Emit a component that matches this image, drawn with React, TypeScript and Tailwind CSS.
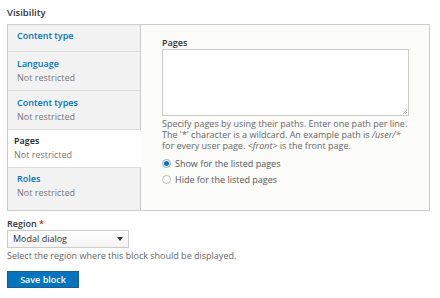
import React from 'react'

const tabs = [
  { title: 'Content type', summary: '' },
  { title: 'Language', summary: 'Not restricted' },
  { title: 'Content types', summary: 'Not restricted' },
  { title: 'Pages', summary: 'Not restricted', active: true },
  { title: 'Roles', summary: 'Not restricted' },
]

export default function App() {
  return (
    <div className="bg-white w-[440px] h-[298px] px-[7px] pt-[6px] text-[#333] font-['Open_Sans',sans-serif] text-[9px]">
      <h2 className="font-semibold text-[9.5px] leading-[14px]">Visibility</h2>

      <div className="mt-[4px] flex border border-[#ccc] w-[423px] h-[187px]">
        {/* tabs */}
        <ul className="w-[133px] bg-[#f2f2f2] border-r border-[#ccc] flex flex-col">
          {tabs.map((t, i) => (
            <li
              key={i}
              className={
                t.active
                  ? 'bg-white -mr-px pl-[6px] pt-[4px] pb-[5px] border-b border-[#ddd] leading-[14px]'
                  : i === tabs.length - 1
                  ? 'pl-[9px] pt-[4px] leading-[14px] flex-1'
                  : i === 0
                  ? 'pl-[9px] pt-[4px] pb-[8px] border-b border-[#ddd] leading-[14px]'
                  : 'pl-[9px] pt-[5px] pb-[5px] border-b border-[#ddd] leading-[14px]'
              }
            >
              <div className={t.active ? 'font-semibold text-[#222]' : 'font-semibold text-[#0074bd]'}>{t.title}</div>
              {t.summary && <div className="text-[#777]">{t.summary}</div>}
            </li>
          ))}
        </ul>

        {/* pane */}
        <div className="flex-1 bg-[#fcfcfa] pl-[21px] pr-[20px] pt-[11px]">
          <label className="block font-semibold leading-[13px]">Pages</label>
          <div className="relative w-[247px] h-[67px] border border-[#ccc] bg-white">
            <svg className="absolute right-[1px] bottom-[1px]" width="5" height="5" viewBox="0 0 5 5">
              <path d="M5 1L1 5M5 3L3 5" stroke="#999" strokeWidth="0.7" />
            </svg>
          </div>
          <p className="mt-[2px] text-[#666] leading-[11px]">
            Specify pages by using their paths. Enter one path per line. The '*' character is a wildcard. An example path is <em>/user/*</em> for every user page. <em>&lt;front&gt;</em> is the front page.
          </p>
          <div className="mt-[7px] flex flex-col gap-[5px] text-[#555]">
            <label className="flex items-center gap-[4px] leading-[11px]">
              <span className="w-[9px] h-[9px] rounded-full border border-[#9ab] bg-white flex items-center justify-center">
                <span className="w-[5px] h-[5px] rounded-full bg-[#0074bd]" />
              </span>
              Show for the listed pages
            </label>
            <label className="flex items-center gap-[4px] leading-[11px]">
              <span className="w-[9px] h-[9px] rounded-full border border-[#bbb] bg-white" />
              Hide for the listed pages
            </label>
          </div>
        </div>
      </div>

      <div className="mt-[6px]">
        <div className="font-semibold leading-[13px]">
          Region <span className="text-[#e32700]">*</span>
        </div>
        <div className="w-[122px] h-[18px] border border-[#ccc] bg-gradient-to-b from-white to-[#f3f3f3] flex items-center justify-between pl-[5px] pr-[5px] text-[#333]">
          <span>Modal dialog</span>
          <svg width="6" height="4" viewBox="0 0 6 4">
            <path d="M0 0H6L3 4Z" fill="#333" />
          </svg>
        </div>
        <p className="mt-[2px] text-[#666] leading-[12px]">Select the region where this block should be displayed.</p>
        <button className="mt-[9px] w-[72px] h-[17px] bg-[#0074bd] border border-[#1e5c90] text-white font-semibold leading-[15px] text-center">
          Save block
        </button>
      </div>
    </div>
  )
}
